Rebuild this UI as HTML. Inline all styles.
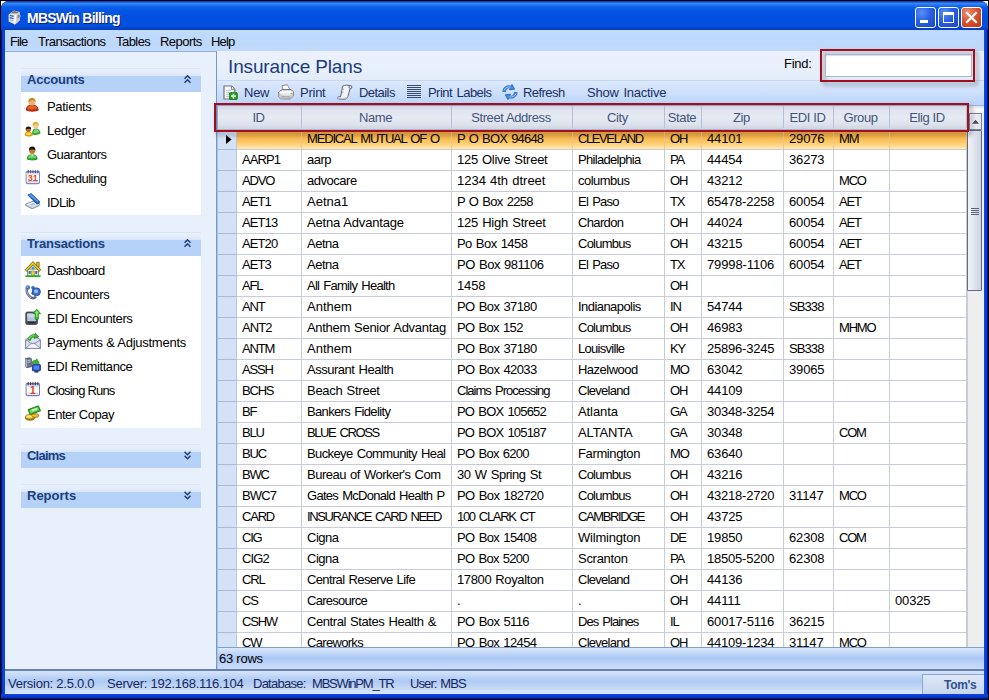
<!DOCTYPE html>
<html lang="en">
<head>
<meta charset="utf-8">
<title>MBSWin Billing</title>
<style>
*{box-sizing:border-box;margin:0;padding:0}
html,body{width:989px;height:700px;overflow:hidden;background:#000}
body{position:relative;font-family:"Liberation Sans",sans-serif;font-size:13px;color:#000;letter-spacing:-0.25px}
.abs{position:absolute}
#frame{left:1px;top:1px;width:987px;height:698px;background:#fff}
#win{left:0;top:0;width:987px;height:698px;background:linear-gradient(to right,#00169a 0,#0a36d0 1px,#0a46e2 3px,#0a46e2 984px,#0a36d0 986px,#00169a 987px);border-radius:8px 8px 0 0;overflow:hidden;
 box-shadow:inset 1px 0 0 #00138c,inset -1px 0 0 #00138c,inset 0 -1px 0 #00138c}
#title{left:0;top:0;width:987px;height:29px;border-radius:8px 8px 0 0;
 background:linear-gradient(to bottom,#0a2fb0 0,#0a52d8 3%,#3a8af6 9%,#2074f0 14%,#0860e8 22%,#0555e4 34%,#0350e0 55%,#034fdf 72%,#0450e0 84%,#0447cf 92%,#0a3bb8 100%)}
#title .cap{left:26px;top:9px;color:#fff;font-weight:bold;font-size:14px;letter-spacing:-0.75px;text-shadow:1px 1px 0 #0a1f7a}
.tb{top:6px;width:21px;height:21px;border:1px solid #fff;border-radius:3px;
 background:radial-gradient(circle at 30% 25%,#5a8ff8 0,#2a5fe0 45%,#1a45c8 100%)}
#bclose{background:radial-gradient(circle at 30% 25%,#f09070 0,#d8502a 50%,#b83a18 100%)}
#menu{left:4px;top:29px;width:979px;height:22px;background:linear-gradient(to bottom,#bfdbff 0,#bdd8fb 70%,#c2dbfb 100%);border-bottom:1px solid #a8c4ea}
#menu span{position:absolute;top:4px;font-size:13px}
#side{left:4px;top:50px;width:212px;height:618px;background:#e8f0fb;border-top:1px solid #8fb1dc;border-right:1px solid #7797c9}
.gh{left:16px;width:180px;height:24px;background:linear-gradient(to bottom,#cfdff6 0,#ebf2fd 5%,#dbe7fb 32%,#b7d2f8 33%,#b7d2f8 100%)}
.gh b{position:absolute;left:6px;top:4px;color:#1c3f7c;font-size:13px;letter-spacing:-0.2px}
.gb{left:16px;width:180px;background:#fff}
.it{position:absolute;left:26px;font-size:13px;white-space:nowrap}
.ic{position:absolute;left:4px;width:16px;height:16px}
.chev{position:absolute;left:163px;top:7px;width:7px;height:9px}
#main{left:216px;top:50px;width:767px;height:618px;background:#cfe0f8}
#ptitle{left:0;top:0;width:767px;height:30px;background:linear-gradient(to bottom,#eaf1fc 0,#e8f0fb 60%,#e2ecfa 100%);border-bottom:1px solid #c6d8f3}
#ptitle .h{left:11px;top:5px;font-size:19px;color:#1a3a7e;letter-spacing:-0.15px}
#tool{left:0;top:30px;width:767px;height:24px;background:linear-gradient(to bottom,#dde9fb 0,#cfe0fa 45%,#bad4f9 100%)}
#tool span{position:absolute;top:4px;font-size:13px;color:#1a2f66;white-space:nowrap;word-spacing:1.5px}
#tool svg{position:absolute;top:3px;width:16px;height:16px}
#grid{left:0;top:54px;width:767px;height:542px;background:#fff;border-left:1px solid #a9c1e6;border-top:1px solid #9db5da;overflow:hidden}
#ghead{left:0;top:0;width:749px;height:24px;z-index:2;background:linear-gradient(to bottom,#d0d6e2 0,#dfe4ee 18%,#e6eaf2 50%,#dde2ec 80%,#cfd6e2 100%);border-bottom:1px solid #a9b6cc}
#ghead span{position:absolute;top:0;height:22px;text-align:center;color:#43557a;font-size:13px;border-right:1px solid #b4c0d4;line-height:24px;letter-spacing:-.4px;padding-right:2px}
.r{position:absolute;left:0;width:749px;height:21px;border-bottom:1px solid #c8ccd6;background:#fff}
.r i{position:absolute;top:0;height:20px;font-style:normal;line-height:20px;padding-left:5px;border-right:1px solid #c8ccd6;white-space:nowrap;overflow:hidden;font-size:13px}
.r i.ind{left:0;width:19px;height:21px;background:#d3e2f6;border-right:1px solid #b9c7dc;border-bottom:1px solid #a9bbd8;padding:0}
.u{letter-spacing:-1.2px;word-spacing:2px}
.sel{background:linear-gradient(to bottom,#e89c36 0,#f3a93c 18%,#fbb84a 40%,#fcc866 65%,#fedd96 88%,#ffe9b6 100%)}
.sel i{border-right-color:#e9c88a}
#foot{left:0;top:596px;width:767px;height:22px;border-top:1px solid #7f9fd0;border-left:1px solid #a9c1e6;background:linear-gradient(to bottom,#dbe8fb 0,#b2cdf5 40%,#abc8f3 50%,#bdd4f7 75%,#cbdef9 100%)}
#foot span{position:absolute;left:1px;top:3px;font-size:13px}
#status{left:4px;top:668px;width:979px;height:25px;border-top:2px solid #6483b3;background:linear-gradient(to bottom,#d6e4fa 0,#b4cdf5 36%,#afcaf3 46%,#c6daf8 75%,#dbe7fb 100%)}
#status span{position:absolute;top:5px;color:#16265e;font-size:13px;white-space:nowrap}
.red{border:2px solid #a30d1e;filter:drop-shadow(3px 3px 2px rgba(50,50,70,.5))}
</style>
</head>
<body>
<div id="frame" class="abs">
<div id="win" class="abs">
 <div id="title" class="abs">
  <svg class="abs" style="left:6px;top:8px" width="16" height="16" viewBox="0 0 16 16"><path d="M1.600 5.600l5.400-4 5.600 1.400v8.600L8 15.400l-6.400-3z" fill="#e2e7ef"/><path d="M3.400 4.400l3.800-2.600 4.600 1.200-1.600 1.600z" fill="#8a7a58"/><path d="M8 15.400l4.600-3.800V3L9.400 6z" fill="#d6cfc2"/><path d="M9.400 6L8 15.400l-1.400-.7L8 5.400z" fill="#fff"/><path d="M2.800 6.400l4 1M2.600 8.600l4 1" stroke="#3564c0" stroke-width="1.200"/><path d="M2.600 10.800l3.800 1" stroke="#9ab4e0" stroke-width="1.100"/><path d="M10.600 6.200l1.200-.6v3l-1.200.8z" fill="#7a6a8a"/><path d="M12.400 5.800l2.400 1.200-2.400 1.400z" fill="#48a8f4"/></svg>
  <div class="abs cap">MBSWin Billing</div>
  <div class="abs tb" id="bmin" style="left:914px"><div class="abs" style="left:4px;top:12px;width:8px;height:3px;background:#fff"></div></div>
  <div class="abs tb" id="bmax" style="left:937px"><div class="abs" style="left:4px;top:4px;width:11px;height:11px;border:1px solid #fff;border-top-width:3px"></div></div>
  <div class="abs tb" id="bclose" style="left:960px"><svg class="abs" style="left:0;top:0" width="19" height="19" viewBox="0 0 19 19"><path d="M5 5l9 9M14 5l-9 9" stroke="#fff" stroke-width="2.2" stroke-linecap="square"/></svg></div>
 </div>
 <div id="menu" class="abs">
  <span style="left:5px;letter-spacing:-.9px">File</span><span style="left:33px;letter-spacing:-.53px">Transactions</span><span style="left:111px;letter-spacing:-.55px">Tables</span><span style="left:155px;letter-spacing:-.55px">Reports</span><span style="left:206px;letter-spacing:-.85px">Help</span>
 </div>
 <!--SIDE--><div id="side" class="abs"><div class="abs gh" style="top:16px"><b style="letter-spacing:-0.2px">Accounts</b><svg class="chev" viewBox="0 0 7 9"><path d="M.5 3.800l3-3 3 3M.5 7.800l3-3 3 3" fill="none" stroke="#1c3f7c" stroke-width="1.500"/></svg></div><div class="abs gb" style="top:40px;height:123px"><svg class="ic" style="top:5px" viewBox="0 0 16 16"><path d="M.8 13.300C.8 9.600 3.500 7.600 7 7.600s6.700 2 6.700 5.700c-1.800 1.800-11.100 1.800-12.900 0z" fill="#b42c10"/><path d="M2 12C2.400 9.400 4.400 8.200 7 8.200s4.600 1.100 5.200 3.200C10 12.600 4.600 13 2 12z" fill="#e0602c"/><circle cx="6.900" cy="4.900" r="3.400" fill="#f0b070"/><path d="M3.500 5.400C3 2.800 4.800 1 7 1s4.200 1.600 3.600 4.600C10 4 9.200 3.400 8 3 6.800 3.800 4.600 3.600 3.500 5.400z" fill="#c08c1c"/></svg><span class="it" style="top:7px;letter-spacing:-0.3px">Patients</span><svg class="ic" style="top:29px" viewBox="0 0 16 16"><path d="M7 13.200c0-3.800 1.400-5.800 3.800-5.800s4.600 1.800 4.600 5.200c-1.600 1.400-6.800 1.800-8.400.6z" fill="#38a034"/><path d="M8.400 11.800c.2-2.400 1.200-3.600 2.600-3.600s2.800 1 3.200 3c-1.600.8-4.200 1-5.800.6z" fill="#78d870"/><circle cx="10.600" cy="4.400" r="3" fill="#f4c890"/><path d="M7.600 4.600C7.200 2.400 8.800.8 10.600.8s3.600 1.400 3.200 3.800c-.8-1.200-1.800-1.600-2.800-1.800-.8.800-2.400.6-3.400 1.800z" fill="#dcb030"/><path d="M-.2 14.600c0-2.800 1.400-4 3.600-4s4.400 1.200 4.400 3.800c-1.600 1.400-6.400 1.600-8 .2z" fill="#d8a010"/><path d="M1 13.600c.2-1.600 1.200-2.400 2.400-2.400s2.800.6 3 2.200c-1.600.8-4 .8-5.400.2z" fill="#f8d848"/><circle cx="3.400" cy="8.600" r="2.600" fill="#b86c30"/><path d="M.7 8.400C.4 6.600 1.800 5.600 3.400 5.600s3.200 1 2.700 3C5 7.600 1.800 7.600.7 8.400z" fill="#1c140c"/></svg><span class="it" style="top:31px;letter-spacing:-0.3px">Ledger</span><svg class="ic" style="top:53px" viewBox="0 0 16 16"><path d="M1.800 14.200c0-3.400 2.200-5 5.400-5s5.400 1.600 5.400 5c-1.800 1.600-9 1.600-10.800 0z" fill="#2c9c30"/><path d="M3 13c.4-2.200 2-3.200 4.200-3.200s3.600.8 4.200 2.800c-2 1-6.400 1.200-8.400.4z" fill="#70d468"/><path d="M5.800 9.400l1.400 1.600 1.400-1.600z" fill="#fff"/><circle cx="7.200" cy="5.800" r="3.100" fill="#c07c2c"/><path d="M4 5.600C3.600 3 5.200 1.600 7.200 1.600s3.600 1.400 3.200 4C9.400 4.200 5 4.200 4 5.600z" fill="#18100a"/></svg><span class="it" style="top:55px;letter-spacing:-0.56px">Guarantors</span><svg class="ic" style="top:77px" viewBox="0 0 16 16"><path d="M.6 3.400C.6 2.600 1.200 2 2 2h11.600c.8 0 1.400.6 1.400 1.400v9.800c0 1.200-.8 2-2 2H2.600c-1.200 0-2-.8-2-2z" fill="#8088c0"/><path d="M1.600 4h12.400v8.600c0 .8-.4 1.400-1.200 1.400H2.800c-.8 0-1.200-.6-1.200-1.400z" fill="#fff"/><path d="M1.600 3.400h12.400V6H1.600z" fill="#e8ecf8"/><path d="M2.600 11.400h10.400v2H2.600z" fill="#c0c8ec"/><g fill="#50547c"><rect x="2.600" y="1.200" width="1.200" height="3"/><rect x="5" y="1.200" width="1.200" height="3"/><rect x="7.400" y="1.200" width="1.200" height="3"/><rect x="9.800" y="1.200" width="1.200" height="3"/><rect x="12.200" y="1.200" width="1.200" height="3"/></g><text x="7.800" y="11.800" font-family="Liberation Sans,sans-serif" font-size="9" font-weight="bold" fill="#e84414" text-anchor="middle" letter-spacing="0">31</text></svg><span class="it" style="top:79px;letter-spacing:-0.48px">Scheduling</span><svg class="ic" style="top:101px" viewBox="0 0 16 16"><path d="M.6 11.200L8 8.200l7 3-1 1.400-6.600 3.200L.8 12.600z" fill="#d0d6e0" stroke="#687488" stroke-width=".8"/><path d="M2.200 11.200l6-2.400 5 2.200-5.800 2.600z" fill="#f4f6fa"/><path d="M4.400 11.400l3.600-1.400 2.800 1.200-3.400 1.600z" fill="#a8c0e0"/><path d="M2.800 2l3.400-1.400 8.400 7.800-.4 1.600-2.400 1z" fill="#1c64c8" stroke="#0c3c90" stroke-width=".7"/><path d="M3.800 2l2.200-.8 7.600 7-.8 1z" fill="#58a0f0"/></svg><span class="it" style="top:103px;letter-spacing:-0.53px">IDLib</span></div><div class="abs gh" style="top:180px"><b style="letter-spacing:-0.2px">Transactions</b><svg class="chev" viewBox="0 0 7 9"><path d="M.5 3.800l3-3 3 3M.5 7.800l3-3 3 3" fill="none" stroke="#1c3f7c" stroke-width="1.500"/></svg></div><div class="abs gb" style="top:204px;height:172px"><svg class="ic" style="top:5px" viewBox="0 0 16 16"><path d="M11.600 1.200h2.600V6h-2.600z" fill="#e8b830" stroke="#6a5a10" stroke-width=".7"/><path d="M2.600 8h10.800v7H2.600z" fill="#f8f4dc" stroke="#5a7a2a" stroke-width=".8"/><path d="M8 .6L.2 8.800l1.600 1.500L8 3.800l6.200 6.500 1.600-1.500z" fill="#f0c828" stroke="#5a6a10" stroke-width=".9"/><circle cx="8" cy="7" r="1.500" fill="#4c84e0"/><rect x="6.600" y="10" width="2.800" height="5" fill="#f0c828" stroke="#8a7a20" stroke-width=".5"/><rect x="3.600" y="10" width="2.200" height="3" fill="#3c70d8"/><rect x="10.200" y="10" width="2.200" height="3" fill="#3c70d8"/><path d="M.4 15.200h15.200" stroke="#18b818" stroke-width="1.800"/></svg><span class="it" style="top:7px;letter-spacing:-0.68px">Dashboard</span><svg class="ic" style="top:29px" viewBox="0 0 16 16"><path d="M2.400 2.600C.6 6 2.600 10.600 6.200 12.600c2 1 3.800.4 4.800-1" fill="none" stroke="#606c84" stroke-width="2.600"/><path d="M2.400 2.600C.6 6 2.600 10.600 6.200 12.600" fill="none" stroke="#a8b4cc" stroke-width="1"/><path d="M8.200 2.400c.8 2.400.2 5-1.400 6.800" fill="none" stroke="#606c84" stroke-width="2.200"/><circle cx="2.800" cy="2.400" r="2.200" fill="#3c6cc4"/><circle cx="2.400" cy="2" r="1" fill="#8cb4f0"/><circle cx="8" cy="2.800" r="1.800" fill="#3c6cc4"/><circle cx="11.400" cy="6.800" r="4" fill="#3870d0" stroke="#28488c" stroke-width=".8"/><circle cx="11" cy="6.200" r="2" fill="#90bcf8"/></svg><span class="it" style="top:31px;letter-spacing:-0.34px">Encounters</span><svg class="ic" style="top:53px" viewBox="0 0 16 16"><rect x=".8" y="3" width="11.600" height="12.400" rx="1.400" fill="#505864" stroke="#30363e" stroke-width=".8"/><rect x="2.200" y="4.600" width="8.800" height="7.400" fill="#b4c4dc"/><path d="M2.200 4.600h8.800v3.600H2.200z" fill="#ccd8ea"/><rect x="2.800" y="13" width="7.600" height="1.400" fill="#262a32"/><path d="M11.800.2l3.800 4.400h-2.200v5.600h-3.200V4.600H8z" fill="#38c030" stroke="#188014" stroke-width=".7"/><path d="M11.800 1.800l1.800 2.200h-1.200v4h-1.200V4h-1.200z" fill="#98f088"/></svg><span class="it" style="top:55px;letter-spacing:-0.4px">EDI Encounters</span><svg class="ic" style="top:77px" viewBox="0 0 16 16"><path d="M.6 6.800L8 2l7.400 4.800v8.600H.6z" fill="#dce0f0" stroke="#7078a8" stroke-width=".9"/><path d="M.6 15.400l5.800-5h3.200l5.800 5z" fill="#f6f7fc" stroke="#7078a8" stroke-width=".8"/><path d="M.6 6.800l6.200 4M15.400 6.800l-6.200 4" stroke="#7078a8" stroke-width=".8"/><path d="M3.200 7C3.400 3.400 6.400 1 9.600 1.800L10.200 0l3.600 4-4.800 1.600.4-1.600C7.400 3.800 5.800 5 5.600 7.400z" fill="#34b828" stroke="#187c10" stroke-width=".6"/><path d="M4.200 6C4.800 3.800 7 2.400 9.400 2.800" fill="none" stroke="#98e888" stroke-width=".9"/></svg><span class="it" style="top:79px;letter-spacing:-0.25px">Payments &amp; Adjustments</span><svg class="ic" style="top:101px" viewBox="0 0 16 16"><path d="M.4 1.600L4.600.8l1.800 1v8L2 10.600.4 9.800z" fill="#687890" stroke="#38404e" stroke-width=".7"/><path d="M.4 1.600l1.600.8v8.200L.4 9.800z" fill="#a8b8d0"/><path d="M2.600 3.600l3-.6M2.600 5.400l3-.6" stroke="#d0dcec" stroke-width=".8"/><rect x="7.400" y="7.400" width="8" height="6.400" rx=".8" fill="#1c4cd0" stroke="#0c2070" stroke-width=".8"/><rect x="8.600" y="8.600" width="5.600" height="4" fill="#4c88f8"/><rect x="9.400" y="14" width="4" height="1.600" fill="#384050"/><path d="M7 6.400C7.200 3.800 9.400 2.600 11.200 3.400l.6-1.600 2.400 4.400-4.800.6.800-1.600C9.400 4.800 8.600 5.400 8.400 6.800z" fill="#34b828" stroke="#187c10" stroke-width=".6"/></svg><span class="it" style="top:103px;letter-spacing:-0.4px">EDI Remittance</span><svg class="ic" style="top:125px" viewBox="0 0 16 16"><path d="M.6 3.400C.6 2.600 1.200 2 2 2h11.600c.8 0 1.400.6 1.400 1.400v9.800c0 1.200-.8 2-2 2H2.600c-1.200 0-2-.8-2-2z" fill="#7880a8"/><path d="M1.600 4.600h12.400v8c0 .8-.4 1.400-1.200 1.400H2.800c-.8 0-1.200-.6-1.200-1.400z" fill="#fff"/><path d="M1.600 3.400h12.400V6H1.600z" fill="#dcdfea"/><path d="M2.600 11.800h10.400v1.600H2.600z" fill="#d0d4e8"/><g fill="#3c4060"><rect x="2.600" y="1.200" width="1.200" height="3"/><rect x="5" y="1.200" width="1.200" height="3"/><rect x="7.400" y="1.200" width="1.200" height="3"/><rect x="9.800" y="1.200" width="1.200" height="3"/><rect x="12.200" y="1.200" width="1.200" height="3"/></g><text x="7.800" y="12.800" font-family="Liberation Sans,sans-serif" font-size="10" font-weight="bold" fill="#e43c14" text-anchor="middle" letter-spacing="0">1</text></svg><span class="it" style="top:127px;letter-spacing:-0.82px">Closing Runs</span><svg class="ic" style="top:149px" viewBox="0 0 16 16"><path d="M3 4.600L13.400.8l2.200 5L5.200 10z" fill="#2ca828" stroke="#147010" stroke-width=".8"/><path d="M4.600 5L12.800 2l1.200 3-8.200 3.200z" fill="#7cdc68"/><path d="M7 4.600l4.600-1.600.6 1.400-4.600 1.700z" fill="#d8f8c8"/><ellipse cx="5" cy="13" rx="4.600" ry="2.200" fill="#c88810" stroke="#8a5808" stroke-width=".7"/><ellipse cx="5" cy="11.800" rx="4.600" ry="2.200" fill="#f8d440" stroke="#8a5808" stroke-width=".7"/><ellipse cx="10" cy="10.600" rx="3.800" ry="1.900" fill="#f0bc28" stroke="#8a5808" stroke-width=".7"/><ellipse cx="4.600" cy="11.400" rx="2.400" ry="1" fill="#fcec90"/></svg><span class="it" style="top:151px;letter-spacing:-0.48px">Enter Copay</span></div><div class="abs gh" style="top:392px"><b style="letter-spacing:-0.77px">Claims</b><svg class="chev" viewBox="0 0 7 9"><path d="M.5 .800l3 3 3-3M.5 4.800l3 3 3-3" fill="none" stroke="#1c3f7c" stroke-width="1.500"/></svg></div><div class="abs gh" style="top:432px"><b style="letter-spacing:0px">Reports</b><svg class="chev" viewBox="0 0 7 9"><path d="M.5 .800l3 3 3-3M.5 4.800l3 3 3-3" fill="none" stroke="#1c3f7c" stroke-width="1.500"/></svg></div></div><!--/SIDE-->
 <!--MAIN--><div id="main" class="abs"><div id="ptitle" class="abs"><div class="abs h">Insurance Plans</div><div class="abs" style="left:567px;top:5px;font-size:13px">Find:</div></div><div id="tool" class="abs"><svg style="left:6px" viewBox="0 0 16 16"><path d="M1 2h7.600l3.200 3.200V15H1z" fill="#fdfdfd" stroke="#6c7480" stroke-width="1.200"/><path d="M8.400 2v3.400h3.400" fill="#dfe3ea" stroke="#6c7480" stroke-width=".9"/><path d="M2.800 6.400h5M2.800 8.400h4M2.800 10.400h3M2.800 12.400h3" stroke="#b4bac6" stroke-width=".9"/><rect x="6.400" y="8.400" width="8" height="7.400" rx="1.600" fill="#1c9c1c" stroke="#0c6c0c" stroke-width=".7"/><path d="M10.400 9.800v4.600M8 12.100h4.800" stroke="#e4ffd8" stroke-width="1.700"/></svg><span style="left:27px">New</span><svg style="left:61px" viewBox="0 0 16 16"><path d="M4 1.600L9.400.8l2.800 5.600H5.400z" fill="#fff" stroke="#80848c" stroke-width=".9"/><path d="M.8 8l3.400-2.400h9l2 2.200v4.400l-2.800 2.600H2.600L.8 12.800z" fill="#e8e8e6" stroke="#606468" stroke-width="1"/><path d="M1 8.200h14" stroke="#fff" stroke-width="1.200"/><path d="M.8 9.600v3.200l1.800 2h9.800l2.800-2.600V9.600c-2 2-4 2.400-7 2.400s-5.600-.8-7.400-2.400z" fill="#c8c8c4"/><path d="M4 12.400h7l1 1.400H5z" fill="#fafaf8" stroke="#80848c" stroke-width=".6"/><circle cx="13.200" cy="9.400" r=".7" fill="#60a040"/></svg><span style="left:83px">Print</span><svg style="left:120px" viewBox="0 0 16 16"><path d="M5.600 2.200C7 1 12 .8 14 2c1.200 1 .6 3-1 2.800l-2 7.400c-.4 2-2 3.200-4 3.200H2.400C.8 15.400.4 13.400 1.600 12.600l2 .2z" fill="#f4f5f8" stroke="#5c6478" stroke-width="1"/><path d="M11 12.200c-.4 2-2 3.200-4 3.200H2.400c-1.200 0-1.800-1.200-1.200-2.200 2 1.200 7.200 1 9.800-1z" fill="#b8bece"/><circle cx="13.400" cy="3" r="1.500" fill="#d8dce8" stroke="#5c6478" stroke-width=".8"/><path d="M6.600 4.600l-.4 1.600M6 7.600l-.4 1.600" stroke="#a0a8bc" stroke-width=".9"/></svg><span style="left:142px;letter-spacing:-.55px">Details</span><svg style="left:189px" viewBox="0 0 16 16"><g fill="#3a4a6a" shape-rendering="crispEdges"><rect x="1" y="1" width="14" height="1"/><rect x="1" y="3" width="14" height="1"/><rect x="1" y="5" width="14" height="1"/><rect x="1" y="7" width="14" height="1"/><rect x="1" y="9" width="14" height="1"/><rect x="1" y="11" width="14" height="1"/><rect x="1" y="13" width="14" height="1"/></g></svg><span style="left:211px;letter-spacing:-.55px">Print Labels</span><svg style="left:285px" viewBox="0 0 16 16"><path d="M.8 7.400C1.200 3.200 5.200.8 9 2.200L10 .4l2.800 4.800-5.400.6 1-1.800C6 3.200 3.800 5 3.600 7.600z" fill="#3f8ee8" stroke="#1a58b0" stroke-width=".7"/><path d="M15.200 8.600c-.4 4.200-4.400 6.600-8.200 5.200l-1 1.800-2.800-4.800 5.400-.6-1 1.800c2.400.8 4.600-1 4.800-3.600z" fill="#3f8ee8" stroke="#1a58b0" stroke-width=".7"/><path d="M2 6.400C2.800 4 5.600 2.400 8.600 3.200M14 9.600c-.8 2.400-3.600 4-6.600 3.200" fill="none" stroke="#a8d0fc" stroke-width=".9"/></svg><span style="left:306px;letter-spacing:-.55px">Refresh</span><span style="left:370px">Show Inactive</span></div><div class="abs red" style="left:603px;top:-2px;width:155px;height:33px"></div><div class="abs" style="left:608px;top:3px;width:147px;height:23px;background:#fff;border:1px solid #a7b6cf;box-shadow:inset 0 1px 1px #d4dae6"></div><div id="grid" class="abs"><div id="ghead" class="abs"><span style="left:0px;width:84px">ID</span><span style="left:84px;width:150px">Name</span><span style="left:234px;width:121px">Street Address</span><span style="left:355px;width:92px">City</span><span style="left:447px;width:37px">State</span><span style="left:484px;width:82px">Zip</span><span style="left:566px;width:50px">EDI ID</span><span style="left:616px;width:56px">Group</span><span style="left:672px;width:77px">Elig ID</span></div><div class="r sel" style="top:23px"><i class="ind"><svg style="position:absolute;left:8px;top:6px" width="6" height="9" viewBox="0 0 6 9"><path d="M0 0l5.500 4.500L0 9z" fill="#000"/></svg></i><i style="left:19px;width:65px;letter-spacing:0px"></i><i style="left:84px;width:150px;letter-spacing:-1.17px;word-spacing:1.67px">MEDICAL MUTUAL OF O</i><i style="left:234px;width:121px;letter-spacing:-0.83px;word-spacing:1.33px">P O BOX 94648</i><i style="left:355px;width:92px;letter-spacing:-1.4px">CLEVELAND</i><i style="left:447px;width:37px;letter-spacing:-1.2px">OH</i><i style="left:484px;width:82px;letter-spacing:-0.14px">44101</i><i style="left:566px;width:50px;letter-spacing:-0.14px">29076</i><i style="left:616px;width:56px;letter-spacing:-1.2px">MM</i><i style="left:672px;width:77px;letter-spacing:0px"></i></div><div class="r" style="top:44px"><i class="ind"></i><i style="left:19px;width:65px;letter-spacing:-0.9px">AARP1</i><i style="left:84px;width:150px;letter-spacing:-0.5px">aarp</i><i style="left:234px;width:121px;letter-spacing:-0.27px;word-spacing:0.77px">125 Olive Street</i><i style="left:355px;width:92px;letter-spacing:-0.69px">Philadelphia</i><i style="left:447px;width:37px;letter-spacing:-1.2px">PA</i><i style="left:484px;width:82px;letter-spacing:-0.14px">44454</i><i style="left:566px;width:50px;letter-spacing:-0.14px">36273</i><i style="left:616px;width:56px;letter-spacing:0px"></i><i style="left:672px;width:77px;letter-spacing:0px"></i></div><div class="r" style="top:65px"><i class="ind"></i><i style="left:19px;width:65px;letter-spacing:-1.2px">ADVO</i><i style="left:84px;width:150px;letter-spacing:-0.48px">advocare</i><i style="left:234px;width:121px;letter-spacing:0px;word-spacing:0.5px">1234 4th dtreet</i><i style="left:355px;width:92px;letter-spacing:-0.52px">columbus</i><i style="left:447px;width:37px;letter-spacing:-1.2px">OH</i><i style="left:484px;width:82px;letter-spacing:-0.14px">43212</i><i style="left:566px;width:50px;letter-spacing:0px"></i><i style="left:616px;width:56px;letter-spacing:-1.2px">MCO</i><i style="left:672px;width:77px;letter-spacing:0px"></i></div><div class="r" style="top:86px"><i class="ind"></i><i style="left:19px;width:65px;letter-spacing:-0.9px">AET1</i><i style="left:84px;width:150px;letter-spacing:0px">Aetna1</i><i style="left:234px;width:121px;letter-spacing:-0.71px;word-spacing:1.21px">P O Box 2258</i><i style="left:355px;width:92px;letter-spacing:-0.75px;word-spacing:1.25px">El Paso</i><i style="left:447px;width:37px;letter-spacing:-1.2px">TX</i><i style="left:484px;width:82px;letter-spacing:-0.22px">65478-2258</i><i style="left:566px;width:50px;letter-spacing:-0.14px">60054</i><i style="left:616px;width:56px;letter-spacing:-1.2px">AET</i><i style="left:672px;width:77px;letter-spacing:0px"></i></div><div class="r" style="top:107px"><i class="ind"></i><i style="left:19px;width:65px;letter-spacing:-0.9px">AET13</i><i style="left:84px;width:150px;letter-spacing:-0.2px;word-spacing:0.7px">Aetna Advantage</i><i style="left:234px;width:121px;letter-spacing:-0.21px;word-spacing:0.71px">125 High Street</i><i style="left:355px;width:92px;letter-spacing:-0.65px">Chardon</i><i style="left:447px;width:37px;letter-spacing:-1.2px">OH</i><i style="left:484px;width:82px;letter-spacing:-0.14px">44024</i><i style="left:566px;width:50px;letter-spacing:-0.14px">60054</i><i style="left:616px;width:56px;letter-spacing:-1.2px">AET</i><i style="left:672px;width:77px;letter-spacing:0px"></i></div><div class="r" style="top:128px"><i class="ind"></i><i style="left:19px;width:65px;letter-spacing:-0.9px">AET20</i><i style="left:84px;width:150px;letter-spacing:-0.5px">Aetna</i><i style="left:234px;width:121px;letter-spacing:-0.57px;word-spacing:1.07px">Po Box 1458</i><i style="left:355px;width:92px;letter-spacing:-0.75px">Columbus</i><i style="left:447px;width:37px;letter-spacing:-1.2px">OH</i><i style="left:484px;width:82px;letter-spacing:-0.14px">43215</i><i style="left:566px;width:50px;letter-spacing:-0.14px">60054</i><i style="left:616px;width:56px;letter-spacing:-1.2px">AET</i><i style="left:672px;width:77px;letter-spacing:0px"></i></div><div class="r" style="top:149px"><i class="ind"></i><i style="left:19px;width:65px;letter-spacing:-0.9px">AET3</i><i style="left:84px;width:150px;letter-spacing:-0.5px">Aetna</i><i style="left:234px;width:121px;letter-spacing:-0.48px;word-spacing:0.98px">PO Box 981106</i><i style="left:355px;width:92px;letter-spacing:-0.75px;word-spacing:1.25px">El Paso</i><i style="left:447px;width:37px;letter-spacing:-1.2px">TX</i><i style="left:484px;width:82px;letter-spacing:-0.12px">79998-1106</i><i style="left:566px;width:50px;letter-spacing:-0.14px">60054</i><i style="left:616px;width:56px;letter-spacing:-1.2px">AET</i><i style="left:672px;width:77px;letter-spacing:0px"></i></div><div class="r" style="top:170px"><i class="ind"></i><i style="left:19px;width:65px;letter-spacing:-1.2px">AFL</i><i style="left:84px;width:150px;letter-spacing:-0.74px;word-spacing:1.24px">All Family Health</i><i style="left:234px;width:121px;letter-spacing:-0.14px">1458</i><i style="left:355px;width:92px;letter-spacing:0px"></i><i style="left:447px;width:37px;letter-spacing:-1.2px">OH</i><i style="left:484px;width:82px;letter-spacing:0px"></i><i style="left:566px;width:50px;letter-spacing:0px"></i><i style="left:616px;width:56px;letter-spacing:0px"></i><i style="left:672px;width:77px;letter-spacing:0px"></i></div><div class="r" style="top:191px"><i class="ind"></i><i style="left:19px;width:65px;letter-spacing:-1.2px">ANT</i><i style="left:84px;width:150px;letter-spacing:0px">Anthem</i><i style="left:234px;width:121px;letter-spacing:-0.6px;word-spacing:1.1px">PO Box 37180</i><i style="left:355px;width:92px;letter-spacing:-0.56px">Indianapolis</i><i style="left:447px;width:37px;letter-spacing:-1.2px">IN</i><i style="left:484px;width:82px;letter-spacing:-0.14px">54744</i><i style="left:566px;width:50px;letter-spacing:-0.9px">SB338</i><i style="left:616px;width:56px;letter-spacing:0px"></i><i style="left:672px;width:77px;letter-spacing:0px"></i></div><div class="r" style="top:212px"><i class="ind"></i><i style="left:19px;width:65px;letter-spacing:-0.9px">ANT2</i><i style="left:84px;width:150px;letter-spacing:-0.3px;word-spacing:0.8px">Anthem Senior Advantag</i><i style="left:234px;width:121px;letter-spacing:-0.67px;word-spacing:1.17px">PO Box 152</i><i style="left:355px;width:92px;letter-spacing:-0.75px">Columbus</i><i style="left:447px;width:37px;letter-spacing:-1.2px">OH</i><i style="left:484px;width:82px;letter-spacing:-0.14px">46983</i><i style="left:566px;width:50px;letter-spacing:0px"></i><i style="left:616px;width:56px;letter-spacing:-1.2px">MHMO</i><i style="left:672px;width:77px;letter-spacing:0px"></i></div><div class="r" style="top:233px"><i class="ind"></i><i style="left:19px;width:65px;letter-spacing:-1.2px">ANTM</i><i style="left:84px;width:150px;letter-spacing:0px">Anthem</i><i style="left:234px;width:121px;letter-spacing:-0.6px;word-spacing:1.1px">PO Box 37180</i><i style="left:355px;width:92px;letter-spacing:-0.71px">Louisville</i><i style="left:447px;width:37px;letter-spacing:-1.2px">KY</i><i style="left:484px;width:82px;letter-spacing:-0.22px">25896-3245</i><i style="left:566px;width:50px;letter-spacing:-0.9px">SB338</i><i style="left:616px;width:56px;letter-spacing:0px"></i><i style="left:672px;width:77px;letter-spacing:0px"></i></div><div class="r" style="top:254px"><i class="ind"></i><i style="left:19px;width:65px;letter-spacing:-1.2px">ASSH</i><i style="left:84px;width:150px;letter-spacing:-0.48px;word-spacing:0.98px">Assurant Health</i><i style="left:234px;width:121px;letter-spacing:-0.6px;word-spacing:1.1px">PO Box 42033</i><i style="left:355px;width:92px;letter-spacing:-0.52px">Hazelwood</i><i style="left:447px;width:37px;letter-spacing:-1.2px">MO</i><i style="left:484px;width:82px;letter-spacing:-0.14px">63042</i><i style="left:566px;width:50px;letter-spacing:-0.14px">39065</i><i style="left:616px;width:56px;letter-spacing:0px"></i><i style="left:672px;width:77px;letter-spacing:0px"></i></div><div class="r" style="top:275px"><i class="ind"></i><i style="left:19px;width:65px;letter-spacing:-1.2px">BCHS</i><i style="left:84px;width:150px;letter-spacing:-0.27px;word-spacing:0.77px">Beach Street</i><i style="left:234px;width:121px;letter-spacing:-0.97px;word-spacing:1.47px">Claims Processing</i><i style="left:355px;width:92px;letter-spacing:-0.74px">Cleveland</i><i style="left:447px;width:37px;letter-spacing:-1.2px">OH</i><i style="left:484px;width:82px;letter-spacing:-0.14px">44109</i><i style="left:566px;width:50px;letter-spacing:0px"></i><i style="left:616px;width:56px;letter-spacing:0px"></i><i style="left:672px;width:77px;letter-spacing:0px"></i></div><div class="r" style="top:296px"><i class="ind"></i><i style="left:19px;width:65px;letter-spacing:-1.2px">BF</i><i style="left:84px;width:150px;letter-spacing:-0.65px;word-spacing:1.15px">Bankers Fidelity</i><i style="left:234px;width:121px;letter-spacing:-0.81px;word-spacing:1.31px">PO BOX 105652</i><i style="left:355px;width:92px;letter-spacing:-0.08px">Atlanta</i><i style="left:447px;width:37px;letter-spacing:-1.2px">GA</i><i style="left:484px;width:82px;letter-spacing:-0.22px">30348-3254</i><i style="left:566px;width:50px;letter-spacing:0px"></i><i style="left:616px;width:56px;letter-spacing:0px"></i><i style="left:672px;width:77px;letter-spacing:0px"></i></div><div class="r" style="top:317px"><i class="ind"></i><i style="left:19px;width:65px;letter-spacing:-1.2px">BLU</i><i style="left:84px;width:150px;letter-spacing:-1.4px;word-spacing:1.9px">BLUE CROSS</i><i style="left:234px;width:121px;letter-spacing:-0.81px;word-spacing:1.31px">PO BOX 105187</i><i style="left:355px;width:92px;letter-spacing:-0.15px">ALTANTA</i><i style="left:447px;width:37px;letter-spacing:-1.2px">GA</i><i style="left:484px;width:82px;letter-spacing:-0.14px">30348</i><i style="left:566px;width:50px;letter-spacing:0px"></i><i style="left:616px;width:56px;letter-spacing:-1.2px">COM</i><i style="left:672px;width:77px;letter-spacing:0px"></i></div><div class="r" style="top:338px"><i class="ind"></i><i style="left:19px;width:65px;letter-spacing:-1.2px">BUC</i><i style="left:84px;width:150px;letter-spacing:-0.61px;word-spacing:1.11px">Buckeye Community Heal</i><i style="left:234px;width:121px;letter-spacing:-0.72px;word-spacing:1.22px">PO Box 6200</i><i style="left:355px;width:92px;letter-spacing:-0.37px">Farmington</i><i style="left:447px;width:37px;letter-spacing:-1.2px">MO</i><i style="left:484px;width:82px;letter-spacing:-0.14px">63640</i><i style="left:566px;width:50px;letter-spacing:0px"></i><i style="left:616px;width:56px;letter-spacing:0px"></i><i style="left:672px;width:77px;letter-spacing:0px"></i></div><div class="r" style="top:359px"><i class="ind"></i><i style="left:19px;width:65px;letter-spacing:-1.2px">BWC</i><i style="left:84px;width:150px;letter-spacing:-0.51px;word-spacing:1.01px">Bureau of Worker&#x27;s Com</i><i style="left:234px;width:121px;letter-spacing:-0.43px;word-spacing:0.93px">30 W Spring St</i><i style="left:355px;width:92px;letter-spacing:-0.75px">Columbus</i><i style="left:447px;width:37px;letter-spacing:-1.2px">OH</i><i style="left:484px;width:82px;letter-spacing:-0.14px">43216</i><i style="left:566px;width:50px;letter-spacing:0px"></i><i style="left:616px;width:56px;letter-spacing:0px"></i><i style="left:672px;width:77px;letter-spacing:0px"></i></div><div class="r" style="top:380px"><i class="ind"></i><i style="left:19px;width:65px;letter-spacing:-0.9px">BWC7</i><i style="left:84px;width:150px;letter-spacing:-0.72px;word-spacing:1.22px">Gates McDonald Health P</i><i style="left:234px;width:121px;letter-spacing:-0.58px;word-spacing:1.08px">PO Box 182720</i><i style="left:355px;width:92px;letter-spacing:-0.75px">Columbus</i><i style="left:447px;width:37px;letter-spacing:-1.2px">OH</i><i style="left:484px;width:82px;letter-spacing:-0.22px">43218-2720</i><i style="left:566px;width:50px;letter-spacing:-0.14px">31147</i><i style="left:616px;width:56px;letter-spacing:-1.2px">MCO</i><i style="left:672px;width:77px;letter-spacing:0px"></i></div><div class="r" style="top:401px"><i class="ind"></i><i style="left:19px;width:65px;letter-spacing:-1.2px">CARD</i><i style="left:84px;width:150px;letter-spacing:-1.4px;word-spacing:1.9px">INSURANCE CARD NEED</i><i style="left:234px;width:121px;letter-spacing:-1.31px;word-spacing:1.81px">100 CLARK CT</i><i style="left:355px;width:92px;letter-spacing:-1.4px">CAMBRIDGE</i><i style="left:447px;width:37px;letter-spacing:-1.2px">OH</i><i style="left:484px;width:82px;letter-spacing:-0.14px">43725</i><i style="left:566px;width:50px;letter-spacing:0px"></i><i style="left:616px;width:56px;letter-spacing:0px"></i><i style="left:672px;width:77px;letter-spacing:0px"></i></div><div class="r" style="top:422px"><i class="ind"></i><i style="left:19px;width:65px;letter-spacing:-1.2px">CIG</i><i style="left:84px;width:150px;letter-spacing:-0.5px">Cigna</i><i style="left:234px;width:121px;letter-spacing:-0.62px;word-spacing:1.12px">PO Box 15408</i><i style="left:355px;width:92px;letter-spacing:-0.21px">Wilmington</i><i style="left:447px;width:37px;letter-spacing:-1.2px">DE</i><i style="left:484px;width:82px;letter-spacing:-0.14px">19850</i><i style="left:566px;width:50px;letter-spacing:-0.14px">62308</i><i style="left:616px;width:56px;letter-spacing:-1.2px">COM</i><i style="left:672px;width:77px;letter-spacing:0px"></i></div><div class="r" style="top:443px"><i class="ind"></i><i style="left:19px;width:65px;letter-spacing:-0.9px">CIG2</i><i style="left:84px;width:150px;letter-spacing:-0.5px">Cigna</i><i style="left:234px;width:121px;letter-spacing:-0.72px;word-spacing:1.22px">PO Box 5200</i><i style="left:355px;width:92px;letter-spacing:-0.29px">Scranton</i><i style="left:447px;width:37px;letter-spacing:-1.2px">PA</i><i style="left:484px;width:82px;letter-spacing:-0.22px">18505-5200</i><i style="left:566px;width:50px;letter-spacing:-0.14px">62308</i><i style="left:616px;width:56px;letter-spacing:0px"></i><i style="left:672px;width:77px;letter-spacing:0px"></i></div><div class="r" style="top:464px"><i class="ind"></i><i style="left:19px;width:65px;letter-spacing:-1.2px">CRL</i><i style="left:84px;width:150px;letter-spacing:-0.64px;word-spacing:1.14px">Central Reserve Life</i><i style="left:234px;width:121px;letter-spacing:-0.38px;word-spacing:0.88px">17800 Royalton</i><i style="left:355px;width:92px;letter-spacing:-0.74px">Cleveland</i><i style="left:447px;width:37px;letter-spacing:-1.2px">OH</i><i style="left:484px;width:82px;letter-spacing:-0.14px">44136</i><i style="left:566px;width:50px;letter-spacing:0px"></i><i style="left:616px;width:56px;letter-spacing:0px"></i><i style="left:672px;width:77px;letter-spacing:0px"></i></div><div class="r" style="top:485px"><i class="ind"></i><i style="left:19px;width:65px;letter-spacing:-1.2px">CS</i><i style="left:84px;width:150px;letter-spacing:-0.73px">Caresource</i><i style="left:234px;width:121px;letter-spacing:-0.14px">.</i><i style="left:355px;width:92px;letter-spacing:-0.14px">.</i><i style="left:447px;width:37px;letter-spacing:-1.2px">OH</i><i style="left:484px;width:82px;letter-spacing:-0.14px">44111</i><i style="left:566px;width:50px;letter-spacing:0px"></i><i style="left:616px;width:56px;letter-spacing:0px"></i><i style="left:672px;width:77px;letter-spacing:-0.14px">00325</i></div><div class="r" style="top:506px"><i class="ind"></i><i style="left:19px;width:65px;letter-spacing:-1.2px">CSHW</i><i style="left:84px;width:150px;letter-spacing:-0.42px;word-spacing:0.92px">Central States Health &amp;</i><i style="left:234px;width:121px;letter-spacing:-0.6px;word-spacing:1.1px">PO Box 5116</i><i style="left:355px;width:92px;letter-spacing:-0.96px;word-spacing:1.46px">Des Plaines</i><i style="left:447px;width:37px;letter-spacing:-1.2px">IL</i><i style="left:484px;width:82px;letter-spacing:-0.12px">60017-5116</i><i style="left:566px;width:50px;letter-spacing:-0.14px">36215</i><i style="left:616px;width:56px;letter-spacing:0px"></i><i style="left:672px;width:77px;letter-spacing:0px"></i></div><div class="r" style="top:527px"><i class="ind"></i><i style="left:19px;width:65px;letter-spacing:-1.2px">CW</i><i style="left:84px;width:150px;letter-spacing:-0.68px">Careworks</i><i style="left:234px;width:121px;letter-spacing:-0.62px;word-spacing:1.12px">PO Box 12454</i><i style="left:355px;width:92px;letter-spacing:-0.74px">Cleveland</i><i style="left:447px;width:37px;letter-spacing:-1.2px">OH</i><i style="left:484px;width:82px;letter-spacing:-0.22px">44109-1234</i><i style="left:566px;width:50px;letter-spacing:-0.14px">31147</i><i style="left:616px;width:56px;letter-spacing:-1.2px">MCO</i><i style="left:672px;width:77px;letter-spacing:0px"></i></div><div class="abs" style="left:749px;top:0;width:18px;height:541px;background:#eeeeef;border-left:1px solid #c9ccd4"></div><div class="abs" style="left:749px;top:0;width:17px;height:8px;background:linear-gradient(to bottom,#dde2ea,#fff 50%,#e4e8ee)"></div><div class="abs" style="left:751px;top:7px;width:13px;height:17px;border:1px solid #7a8294;background:linear-gradient(to right,#f4f5f8,#e0e4ea)"><svg style="position:absolute;left:2px;top:5px" width="7" height="5" viewBox="0 0 8 5"><path d="M0 5l4-4.500L8 5z" fill="#4a4e5e"/></svg></div><div class="abs" style="left:749px;top:24px;width:15px;height:161px;border:1px solid #5e6a86;border-radius:1px;background:linear-gradient(to right,#f2f4f8 0,#e4e8f0 40%,#c9d2e2 100%)"><svg style="position:absolute;left:3px;top:77px" width="8" height="8" viewBox="0 0 8 8"><path d="M0 .5h8M0 2.500h8M0 4.500h8M0 6.500h8" stroke="#5a627a" stroke-width="1"/></svg></div></div><div class="abs red" style="left:-3px;top:52px;width:755px;height:29px"></div><div id="foot" class="abs"><span>63 rows</span></div></div><!--/MAIN-->
 <!--STATUS--><div id="status" class="abs"><span style="left:3px">Version: 2.5.0.0</span><span style="left:102px">Server: 192.168.116.104</span><span style="left:248px;letter-spacing:-.75px">Database:</span><span style="left:307px;letter-spacing:-1.2px">MBSWinPM_TR</span><span style="left:405px;letter-spacing:-.9px;word-spacing:1px">User: MBS</span><div class="abs" style="left:917px;top:3px;width:62px;height:21px;border-left:1px solid #8ea6cc;border-top:1px solid #8ea6cc;background:linear-gradient(to bottom,#dde7f6,#c6d6ee)"><span style="left:21px;top:3px;font-weight:bold;color:#30508e;font-size:12px;letter-spacing:-.3px">Tom's</span></div></div><div id="bb" class="abs" style="left:0;top:693px;width:987px;height:5px;background:linear-gradient(to bottom,#0a48e4 0,#0a3cd2 45%,#0628b4 75%,#00149a 100%)"></div><!--/STATUS-->
</div>
</div>
</body>
</html>
